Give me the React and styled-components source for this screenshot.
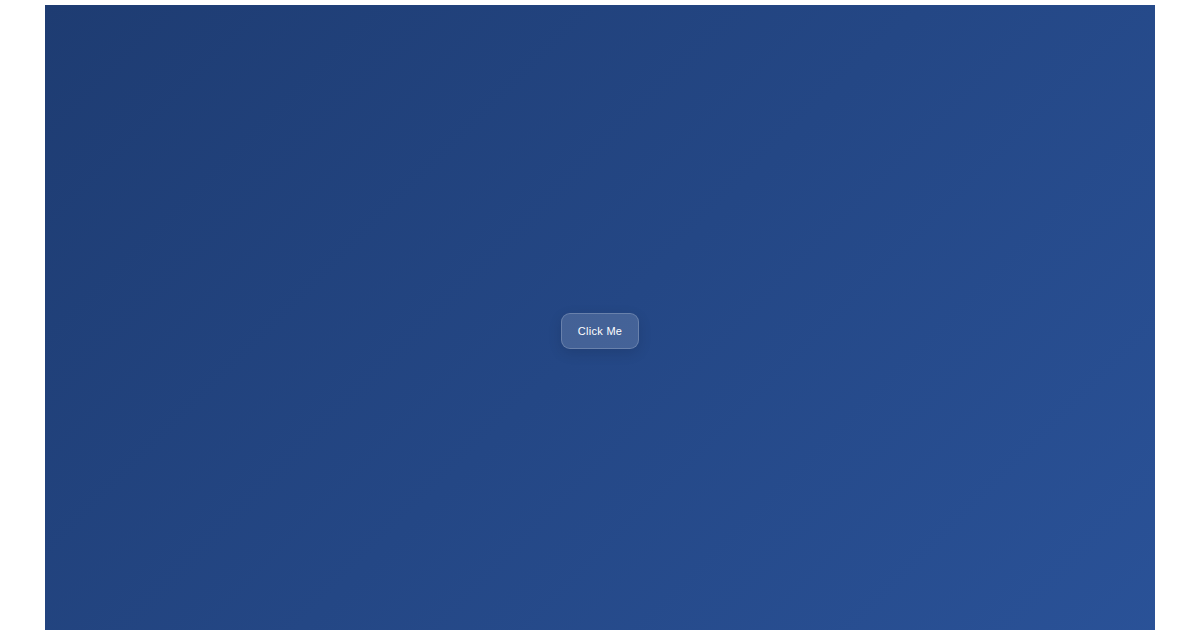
import styled, { createGlobalStyle } from "styled-components";

const Global = createGlobalStyle`
  html, body {
    margin: 0;
    padding: 0;
    background: #ffffff;
    font-family: "Liberation Sans", Arial, sans-serif;
  }
`;

const Page = styled.div`
  max-width: 1110px;
  margin: 5px auto 0;
  height: 652px;
  background: linear-gradient(135deg, #1e3c72 0%, #2a5298 100%);
  display: flex;
  align-items: center;
  justify-content: center;
`;

const GlassButton = styled.button`
  width: 78px;
  height: 36px;
  padding: 0;
  border-radius: 9px;
  border: 1px solid rgba(255, 255, 255, 0.2);
  background: rgba(255, 255, 255, 0.15);
  color: #ffffff;
  font-family: "Liberation Sans", Arial, sans-serif;
  font-size: 11px;
  letter-spacing: 0.3px;
  box-shadow: 0 4px 14px rgba(0, 0, 0, 0.12);
  cursor: pointer;
`;

export default function App() {
  return (
    <>
      <Global />
      <Page>
        <GlassButton>Click Me</GlassButton>
      </Page>
    </>
  );
}
